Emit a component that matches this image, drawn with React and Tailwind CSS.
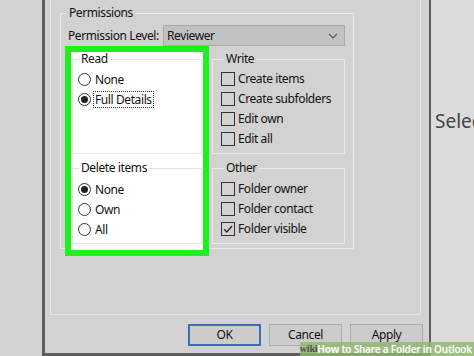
import React from "react";

function Radio({ checked, label, focus }) {
  return (
    <div className="flex h-[20px] items-center">
      <span className="flex h-[13px] w-[13px] shrink-0 items-center justify-center rounded-full border border-[#333] bg-white">
        {checked && <span className="h-[7px] w-[7px] rounded-full bg-[#222]" />}
      </span>
      <span
        className={
          "ml-[2px] whitespace-nowrap leading-[15px] text-[#111] " +
          (focus ? "border border-dotted border-[#333] px-[1px]" : "border border-transparent px-[1px]")
        }
      >
        {label}
      </span>
    </div>
  );
}

function Check({ checked, label }) {
  return (
    <div className="flex h-[20px] items-center">
      <span className="flex h-[14px] w-[14px] shrink-0 items-center justify-center border border-[#333]">
        {checked && (
          <svg width="10" height="10" viewBox="0 0 10 10">
            <path d="M1 5.2 L3.8 8 L9 2" fill="none" stroke="#222" strokeWidth="1.2" />
          </svg>
        )}
      </span>
      <span className="ml-[3px] whitespace-nowrap text-[#111]">{label}</span>
    </div>
  );
}

function Group({ title, className, children, white }) {
  return (
    <fieldset className={"border " + (white ? "border-[#e4e4e4] " : "border-[#e9e9e9] ") + className}>
      <legend className={(white ? "ml-[1px] " : "ml-[3px] ") + "px-[2px] leading-[14px] text-[#111]"}>{title}</legend>
      {children}
    </fieldset>
  );
}

export default function App() {
  return (
    <div
      className="relative flex h-[356px] w-[474px] overflow-hidden bg-[#d3d3d3] text-[12px] tracking-[-0.4px]"
      style={{ fontFamily: '"Noto Sans", "Open Sans", sans-serif' }}
    >
      {/* left strip */}
      <div className="h-full w-[42px] shrink-0 bg-[#d4d4d4]" />
      {/* dialog */}
      <div className="flex h-full w-[389px] shrink-0 flex-col border-b-[3px] border-l-[3px] border-r-[2px] border-[#5e5e5e] bg-[#d2d2d2]">
        {/* tab page */}
        <div className="ml-[5px] mr-[8px] h-[315px] border-b border-l border-r border-[#e6e6e6]">
          <fieldset className="ml-[9px] mt-[6px] h-[243px] w-[294px] border border-[#e9e9e9] pl-[4px]">
            <legend className="ml-[1px] px-[3px] leading-[14px] text-[#111]">Permissions</legend>
            <div className="mt-[5px] flex h-[21px] items-center">
              <span className="ml-[3px] w-[95px] whitespace-nowrap text-[#111]">Permission Level:</span>
              <div className="flex h-[21px] w-[182px] items-center justify-between border border-[#aaa] bg-[#c2c2c2] pl-[3px] pr-[6px]">
                <span className="text-[#111]">Reviewer</span>
                <svg width="10" height="6" viewBox="0 0 10 6">
                  <path d="M1 1 L5 5 L9 1" fill="none" stroke="#555" strokeWidth="1.2" />
                </svg>
              </div>
            </div>
            <div className="flex items-start gap-[3px]">
              {/* highlighted column */}
              <div className="relative z-10 mb-[-9px] h-[210px] w-[144px] shrink-0 border-[6px] border-[#1ef01e] bg-white">
                <Group title="Read" white className="mx-[1px] h-[102px] pl-[5px]">
                  <div className="pt-[3px]">
                    <Radio label="None" />
                    <Radio label="Full Details" checked focus />
                  </div>
                </Group>
                <Group title="Delete items" white className="mx-[1px] mt-[7px] h-[83px] pl-[5px]">
                  <div className="pt-[4px]">
                    <Radio label="None" checked />
                    <Radio label="Own" />
                    <Radio label="All" />
                  </div>
                </Group>
              </div>
              <div className="mt-[6px] flex w-[133px] shrink-0 flex-col">
                <Group title="Write" className="h-[102px] pl-[8px]">
                  <div className="pt-[3px]">
                    <Check label="Create items" />
                    <Check label="Create subfolders" />
                    <Check label="Edit own" />
                    <Check label="Edit all" />
                  </div>
                </Group>
                <Group title="Other" className="mt-[7px] h-[83px] pl-[8px]">
                  <div className="pt-[4px]">
                    <Check label="Folder owner" />
                    <Check label="Folder contact" />
                    <Check label="Folder visible" checked />
                  </div>
                </Group>
              </div>
            </div>
          </fieldset>
        </div>
        {/* buttons */}
        <div className="ml-[143px] mt-[9px] flex gap-[8px]">
          <button className="flex h-[22px] w-[73px] items-center justify-center border-2 border-[#3d6db5] bg-[#cccccc] text-[#111]">
            OK
          </button>
          <button className="flex h-[22px] w-[73px] items-center justify-center border border-[#adadad] bg-[#cccccc] text-[#111]">
            Cancel
          </button>
          <button className="flex h-[22px] w-[73px] items-center justify-center border border-[#adadad] bg-[#cccccc] text-[#111]">
            Apply
          </button>
        </div>
      </div>
      {/* right panel */}
      <div className="h-full min-w-0 flex-1 overflow-hidden bg-[#dcdcdc] pl-[4px] pt-[109px]">
        <span className="whitespace-nowrap text-[19px] leading-[24px] tracking-normal text-[#444]">Select</span>
      </div>
      {/* watermark */}
      <div className="absolute bottom-0 right-0 flex h-[14px] w-[174px] items-center justify-end whitespace-nowrap bg-[#8fb86c]/80 pr-[2px] text-[10px] leading-[14px] tracking-[-0.2px]">
        <span className="font-bold text-[#505050]" style={{ fontFamily: '"Liberation Serif", serif' }}>
          wiki
        </span>
        <span className="font-bold text-white">How</span>
        <span className="font-semibold text-white">&nbsp;to Share a Folder in Outlook</span>
      </div>
    </div>
  );
}
